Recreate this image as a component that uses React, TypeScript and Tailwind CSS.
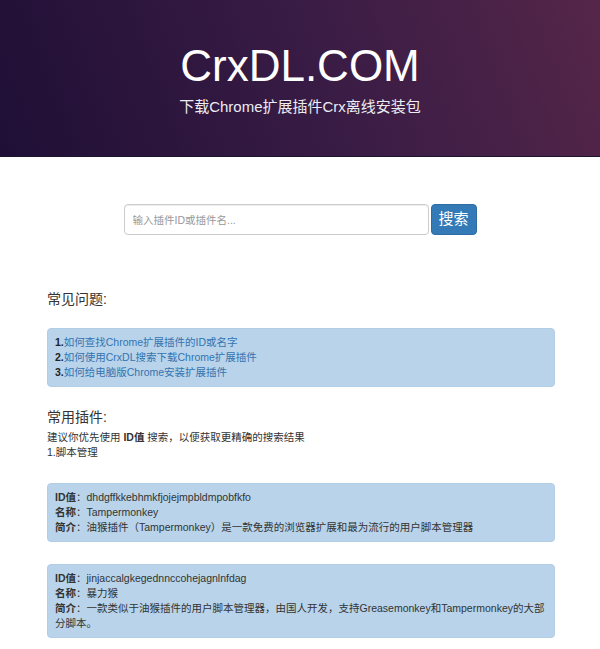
import React from "react";

const font = { fontFamily: '"Liberation Sans", Arial, "Noto Sans CJK SC", sans-serif' };

function Panel({ children, className = "" }: { children: React.ReactNode; className?: string }) {
  return (
    <div
      className={
        "rounded-[4px] border border-[#b2cde6] bg-[#b8d3ea] px-[7px] py-[6px] text-[10.5px] leading-[15px] text-[#333] " +
        className
      }
    >
      {children}
    </div>
  );
}

export default function App() {
  return (
    <div className="min-h-[649px] bg-white" style={font}>
      <header className="h-[157px] border-b border-[#1c1530] bg-[linear-gradient(70deg,#1f0f36_0%,#3a1c45_55%,#552649_100%)] pt-[38px] text-center text-white">
        <h1 className="text-[44px] font-normal leading-[56px]">CrxDL.COM</h1>
        <p className="mt-[3px] text-[15px] leading-[20px] text-[#ececf2]">下载Chrome扩展插件Crx离线安装包</p>
      </header>

      <div className="mt-[47px] flex justify-center gap-[2px]">
        <input
          className="h-[31px] w-[305px] rounded-[4px] border border-[#cccccc] bg-white px-[8px] text-[10.5px] text-[#555] shadow-[inset_0_1px_1px_rgba(0,0,0,0.075)] outline-none placeholder:text-[#999]"
          placeholder="输入插件ID或插件名..."
        />
        <button className="h-[31px] w-[46px] rounded-[4px] border border-[#2e6da4] bg-[#337ab7] text-[15px] text-white">
          搜索
        </button>
      </div>

      <main className="ml-[47px] mr-[45px] mt-[54px] pb-[11px]">
        <h2 className="text-[14px] font-normal leading-[20px] text-[#333]">常见问题:</h2>
        <Panel className="mt-[19px]">
          <div>
            <b className="text-[#222]">1.</b>
            <a className="text-[#3373b0]">如何查找Chrome扩展插件的ID或名字</a>
          </div>
          <div>
            <b className="text-[#222]">2.</b>
            <a className="text-[#3373b0]">如何使用CrxDL搜索下载Chrome扩展插件</a>
          </div>
          <div>
            <b className="text-[#222]">3.</b>
            <a className="text-[#3373b0]">如何给电脑版Chrome安装扩展插件</a>
          </div>
        </Panel>

        <h2 className="mt-[20px] text-[14px] font-normal leading-[20px] text-[#333]">常用插件:</h2>
        <div className="mt-[3px] text-[10.5px] leading-[15px] text-[#333]">
          <div>
            建议你优先使用 <b>ID值</b> 搜索，以便获取更精确的搜索结果
          </div>
          <div>1.脚本管理</div>
        </div>

        <Panel className="mt-[23px]">
          <div>
            <b>ID值</b>：dhdgffkkebhmkfjojejmpbldmpobfkfo
          </div>
          <div>
            <b>名称</b>：Tampermonkey
          </div>
          <div>
            <b>简介</b>：油猴插件（Tampermonkey）是一款免费的浏览器扩展和最为流行的用户脚本管理器
          </div>
        </Panel>

        <Panel className="mt-[22px]">
          <div>
            <b>ID值</b>：jinjaccalgkegednnccohejagnlnfdag
          </div>
          <div>
            <b>名称</b>：暴力猴
          </div>
          <div>
            <b>简介</b>：一款类似于油猴插件的用户脚本管理器，由国人开发，支持Greasemonkey和Tampermonkey的大部分脚本。
          </div>
        </Panel>
      </main>
    </div>
  );
}
